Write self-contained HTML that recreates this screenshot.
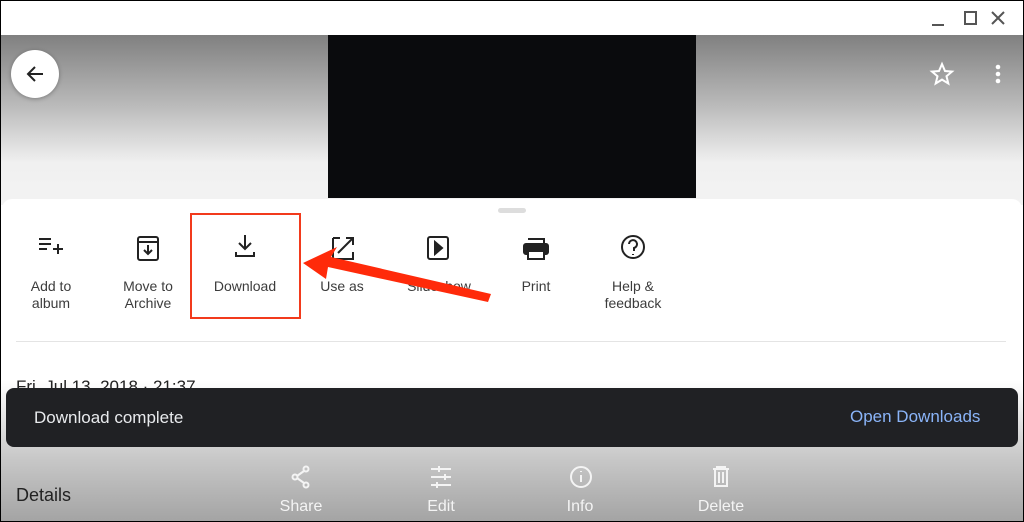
<!DOCTYPE html>
<html><head><style>
*{margin:0;padding:0;box-sizing:border-box}
body{width:1024px;height:522px;overflow:hidden;background:#000;font-family:"Liberation Sans",sans-serif;position:relative}
.frame{position:absolute;left:1px;top:1px;width:1022px;height:520px;background:#fff;overflow:hidden}
.top{position:absolute;left:0;top:34px;width:1022px;height:170px;background:linear-gradient(#808080 0%,#b8b8b8 40%,#f0f0f0 75%,#f3f3f3 100%)}
.img{position:absolute;left:327px;top:34px;width:368px;height:163px;background:#0a0b0d}
.sheet{position:absolute;left:1px;top:198px;width:1020px;height:330px;background:#fff;border-radius:10px 10px 0 0}
.bottom{position:absolute;left:0;top:380px;width:1022px;height:140px;background:linear-gradient(#fff 0%,#e6e6e6 25%,#c8c8c8 55%,#a4a4a4 100%)}
.lbl{position:absolute;font-size:14px;color:#3c3c3c;text-align:center;line-height:17px}
.snack{position:absolute;left:5px;top:387px;width:1012px;height:59px;background:#202124;border-radius:8px}
.bl{position:absolute;top:497px;font-size:16px;color:#f4f4f4;text-align:center;width:80px}
</style></head><body><div class="frame">
<svg style="position:absolute;left:920px;top:8px" width="100" height="20" stroke="#555" fill="none" stroke-width="2">
<line x1="11" y1="16" x2="23" y2="16"/><rect x="44" y="3" width="11" height="12"/><path d="M71 3l12 12M83 3l-12 12"/></svg>
<div class="top"></div>
<div class="img"></div>
<div style="position:absolute;left:10px;top:49px;width:48px;height:48px;border-radius:50%;background:#fff;box-shadow:0 1px 4px rgba(0,0,0,.3)"></div>
<svg style="position:absolute;left:22px;top:61px" width="24" height="24" fill="none" stroke="#222" stroke-width="2"><path d="M20 12H5M12 5l-7 7 7 7"/></svg>
<svg style="position:absolute;left:928px;top:60px" width="26" height="26" fill="none" stroke="#fff" stroke-width="2"><path d="M13 3l3 7 7 .6-5.5 4.6 1.8 7.3L13 18.6 6.7 22.5l1.8-7.3L3 10.6l7-.6z"/></svg>
<svg style="position:absolute;left:990px;top:62px" width="14" height="24" fill="#fff"><circle cx="7" cy="4" r="2.3"/><circle cx="7" cy="11" r="2.3"/><circle cx="7" cy="18" r="2.3"/></svg>
<div class="sheet"></div>
<div style="position:absolute;left:497px;top:207px;width:28px;height:5px;border-radius:3px;background:#ddd"></div>
<svg style="position:absolute;left:0;top:228px" width="680" height="36" fill="none" stroke="#222" stroke-width="2">
<path d="M38 10h12M38 15h12M38 20h8M52 20h10M57 15v10"/>
<rect x="137" y="8" width="20" height="23" rx="2"/><path d="M137 13h20M147 16v9M143 21l4 4 4-4"/>
<path d="M244 6v14M238 14l6 6 6-6M235 23v4h18v-4"/>
<path d="M332 9h7M332 9v21h20v-7M345 9h7v7M352 9l-15 15"/>
<rect x="427" y="8" width="20" height="22" rx="2"/><path d="M434 13l7 6-7 6z" fill="#222"/>
<path d="M527 10h16v5" /><rect x="523" y="15" width="24" height="10" rx="2" fill="#222"/><rect x="527" y="22" width="16" height="8" fill="#fff"/>
<circle cx="632" cy="18" r="11"/><path d="M628 15a4 4 0 1 1 5 4v3M632 25v1"/>
</svg>
<div class="lbl" style="left:10px;top:277px;width:80px">Add to<br>album</div>
<div class="lbl" style="left:107px;top:277px;width:80px">Move to<br>Archive</div>
<div class="lbl" style="left:204px;top:277px;width:80px">Download</div>
<div class="lbl" style="left:301px;top:277px;width:80px">Use as</div>
<div class="lbl" style="left:398px;top:277px;width:80px">Slideshow</div>
<div class="lbl" style="left:495px;top:277px;width:80px">Print</div>
<div class="lbl" style="left:592px;top:277px;width:80px">Help &amp;<br>feedback</div>
<div style="position:absolute;left:189px;top:212px;width:111px;height:106px;border:2px solid #f23a1c"></div>
<svg style="position:absolute;left:0;top:0" width="1022" height="520"><path d="M302 262l34-16-6 10 160 37-3 8-160-35-2 12z" fill="#ff2a0a"/></svg>
<div style="position:absolute;left:15px;top:340px;width:990px;height:1px;background:#e4e4e4"></div>
<div class="bottom"></div>
<div style="position:absolute;left:15px;top:376px;font-size:17px;color:#222">Fri, Jul 13, 2018 · 21:37</div>
<div class="snack"></div>
<div style="position:absolute;left:33px;top:407px;font-size:17px;color:#e8eaed">Download complete</div>
<div style="position:absolute;left:849px;top:406px;font-size:17px;color:#8ab4f8">Open Downloads</div>
<div style="position:absolute;left:15px;top:484px;font-size:18px;color:#222">Details</div>
<svg style="position:absolute;left:0;top:462px" width="1022" height="30" fill="none" stroke="#f4f4f4" stroke-width="2">
<circle cx="305" cy="6" r="2.5"/><circle cx="294" cy="14" r="2.5"/><circle cx="305" cy="22" r="2.5"/><path d="M296 13l7-5M296 15l7 5"/>
<path d="M430 6h20M430 14h20M430 22h20M438 3v6M444 11v6M436 19v6"/>
<circle cx="580" cy="14" r="10"/><path d="M580 12v7M580 8v1"/>
<path d="M712 6h16M716 6v-2h8v2M714 6v17h12V6M718 9v11M722 9v11"/></svg>
<div class="bl" style="left:260px">Share</div>
<div class="bl" style="left:400px">Edit</div>
<div class="bl" style="left:539px">Info</div>
<div class="bl" style="left:680px">Delete</div>
</div></body></html>
